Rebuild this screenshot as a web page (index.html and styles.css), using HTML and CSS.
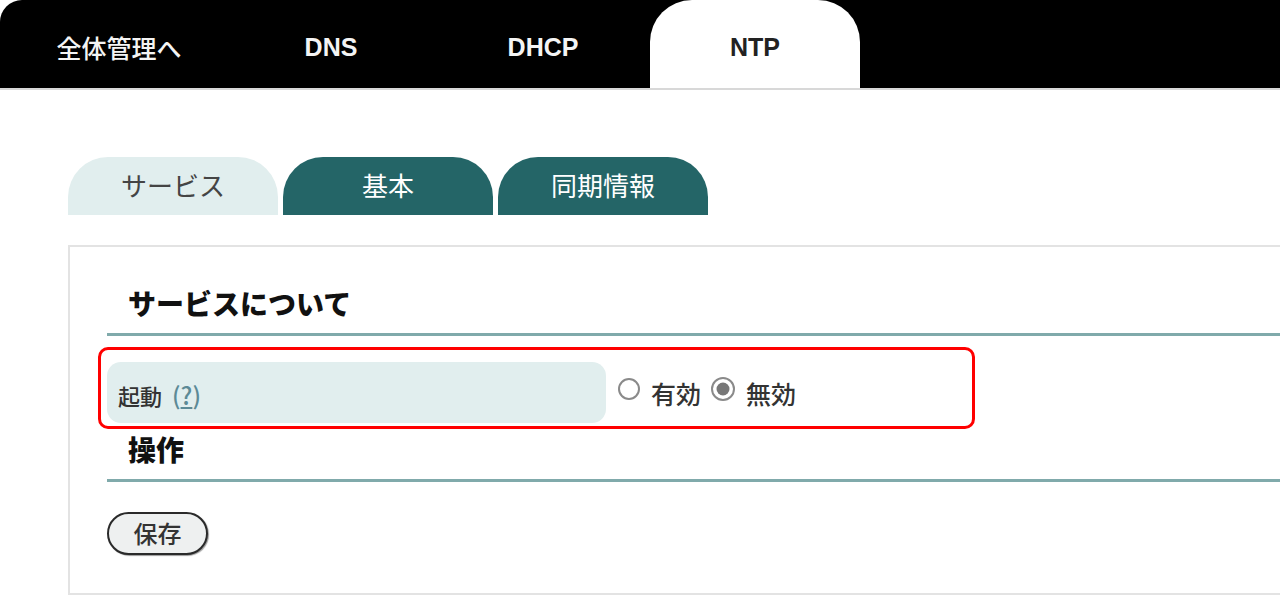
FILE: index.html
```
<!DOCTYPE html>
<html lang="ja">
<head>
<meta charset="utf-8">
<title>NTP</title>
<link rel="stylesheet" href="styles.css">
</head>
<body>
<nav class="topnav">
  <a class="top-tab">全体管理へ</a>
  <a class="top-tab">DNS</a>
  <a class="top-tab">DHCP</a>
  <a class="top-tab active">NTP</a>
</nav>
<div class="subtabs">
  <a class="sub-tab active">サービス</a>
  <a class="sub-tab">基本</a>
  <a class="sub-tab">同期情報</a>
</div>
<section class="panel">
  <h2 class="section-title">サービスについて</h2>
  <div class="row">
    <div class="row-label">起動 <span class="help">(<u>?</u>)</span></div>
    <div class="row-value">
      <label class="radio">
        <svg width="24" height="24" viewBox="0 0 24 24"><circle cx="12" cy="12" r="10" fill="#fff" stroke="#8a8a8a" stroke-width="2"/></svg>
        <span>有効</span>
      </label>
      <label class="radio">
        <svg width="26" height="26" viewBox="0 0 26 26"><circle cx="13" cy="13" r="11" fill="#fff" stroke="#8a8a8a" stroke-width="2"/><circle cx="13" cy="13" r="6.5" fill="#777"/></svg>
        <span>無効</span>
      </label>
    </div>
    <div class="highlight"></div>
  </div>
  <h2 class="section-title ops">操作</h2>
  <button class="save">保存</button>
</section>
</body>
</html>
```
FILE: styles.css
```
html, body {
  margin: 0;
  padding: 0;
  background: #fff;
  overflow: hidden;
}
body {
  font-family: "Liberation Sans", "Noto Sans CJK JP", sans-serif;
  color: #333;
}
.topnav {
  display: flex;
  gap: 2px;
  height: 88px;
  padding-left: 14px;
  background: #000;
  border-top-left-radius: 22px;
  border-bottom: 2px solid #d8d8d8;
}
.top-tab {
  width: 210px;
  display: flex;
  align-items: center;
  justify-content: center;
  padding-top: 6px;
  box-sizing: border-box;
  color: #f4f4f4;
  font-size: 25px;
  font-weight: 700;
  font-family: "Liberation Sans", "Noto Sans CJK JP", sans-serif;
}
.top-tab:first-child {
  font-weight: 500;
}
.top-tab.active {
  background: #fff;
  color: #222;
  border-radius: 42px 42px 0 0;
}
.subtabs {
  display: flex;
  gap: 5px;
  margin: 67px 0 0 68px;
  height: 58px;
}
.sub-tab {
  width: 210px;
  display: flex;
  align-items: center;
  justify-content: center;
  padding-bottom: 4px;
  box-sizing: border-box;
  background: #246567;
  color: #fff;
  font-size: 26px;
  font-family: "Noto Sans CJK JP", sans-serif;
  border-radius: 40px 40px 0 0;
}
.sub-tab.active {
  background: #e1eeee;
  color: #444;
}
.panel {
  margin: 30px -30px 0 68px;
  border: 2px solid #e3e3e3;
  padding: 0 0 34px 37px;
  height: 312px;
  box-sizing: content-box;
}
.section-title {
  margin: 0;
  padding: 39px 0 13px 21px;
  font-family: "Noto Sans CJK JP", sans-serif;
  font-size: 28px;
  line-height: 34px;
  font-weight: 900;
  color: #111;
  border-bottom: 3px solid #80aaab;
}
.section-title.ops {
  padding-top: 10px;
}
.row {
  position: relative;
  display: flex;
  align-items: center;
  margin-top: 28px;
  height: 57px;
  margin-bottom: 1px;
}
.row-label {
  width: 488px;
  height: 57px;
  padding-left: 11px;
  background: #e1eeee;
  border-radius: 14px;
  display: flex;
  align-items: center;
  font-family: "Noto Sans CJK JP", sans-serif;
  font-size: 22px;
  font-weight: 500;
  color: #333;
  padding-top: 4px;
  box-sizing: content-box;
}
.help {
  color: #5c8a96;
  margin-left: 10px;
  font-size: 24px;
}
.row-value {
  display: flex;
  align-items: center;
  gap: 9px;
  margin-left: 11px;
  margin-top: -4px;
}
.radio {
  display: flex;
  align-items: center;
  gap: 10px;
  font-family: "Noto Sans CJK JP", sans-serif;
  font-size: 25px;
  font-weight: 500;
  color: #333;
}
.radio span {
  margin-top: 4px;
}
.radio svg {
  display: block;
  margin-top: -4px;
}
.highlight {
  position: absolute;
  left: -9px;
  top: -17px;
  width: 871px;
  height: 76px;
  border: 3px solid #f00;
  border-radius: 10px;
  pointer-events: none;
}
.save {
  margin-top: 30px;
  width: 101px;
  height: 43px;
  border: 2px solid #2a2a2a;
  border-radius: 22px;
  background: #eef0f0;
  font-family: "Noto Sans CJK JP", sans-serif;
  font-size: 24px;
  font-weight: 500;
  color: #333;
  padding: 0 0 3px;
  box-shadow: 1px 1px 1px #999;
}
```
